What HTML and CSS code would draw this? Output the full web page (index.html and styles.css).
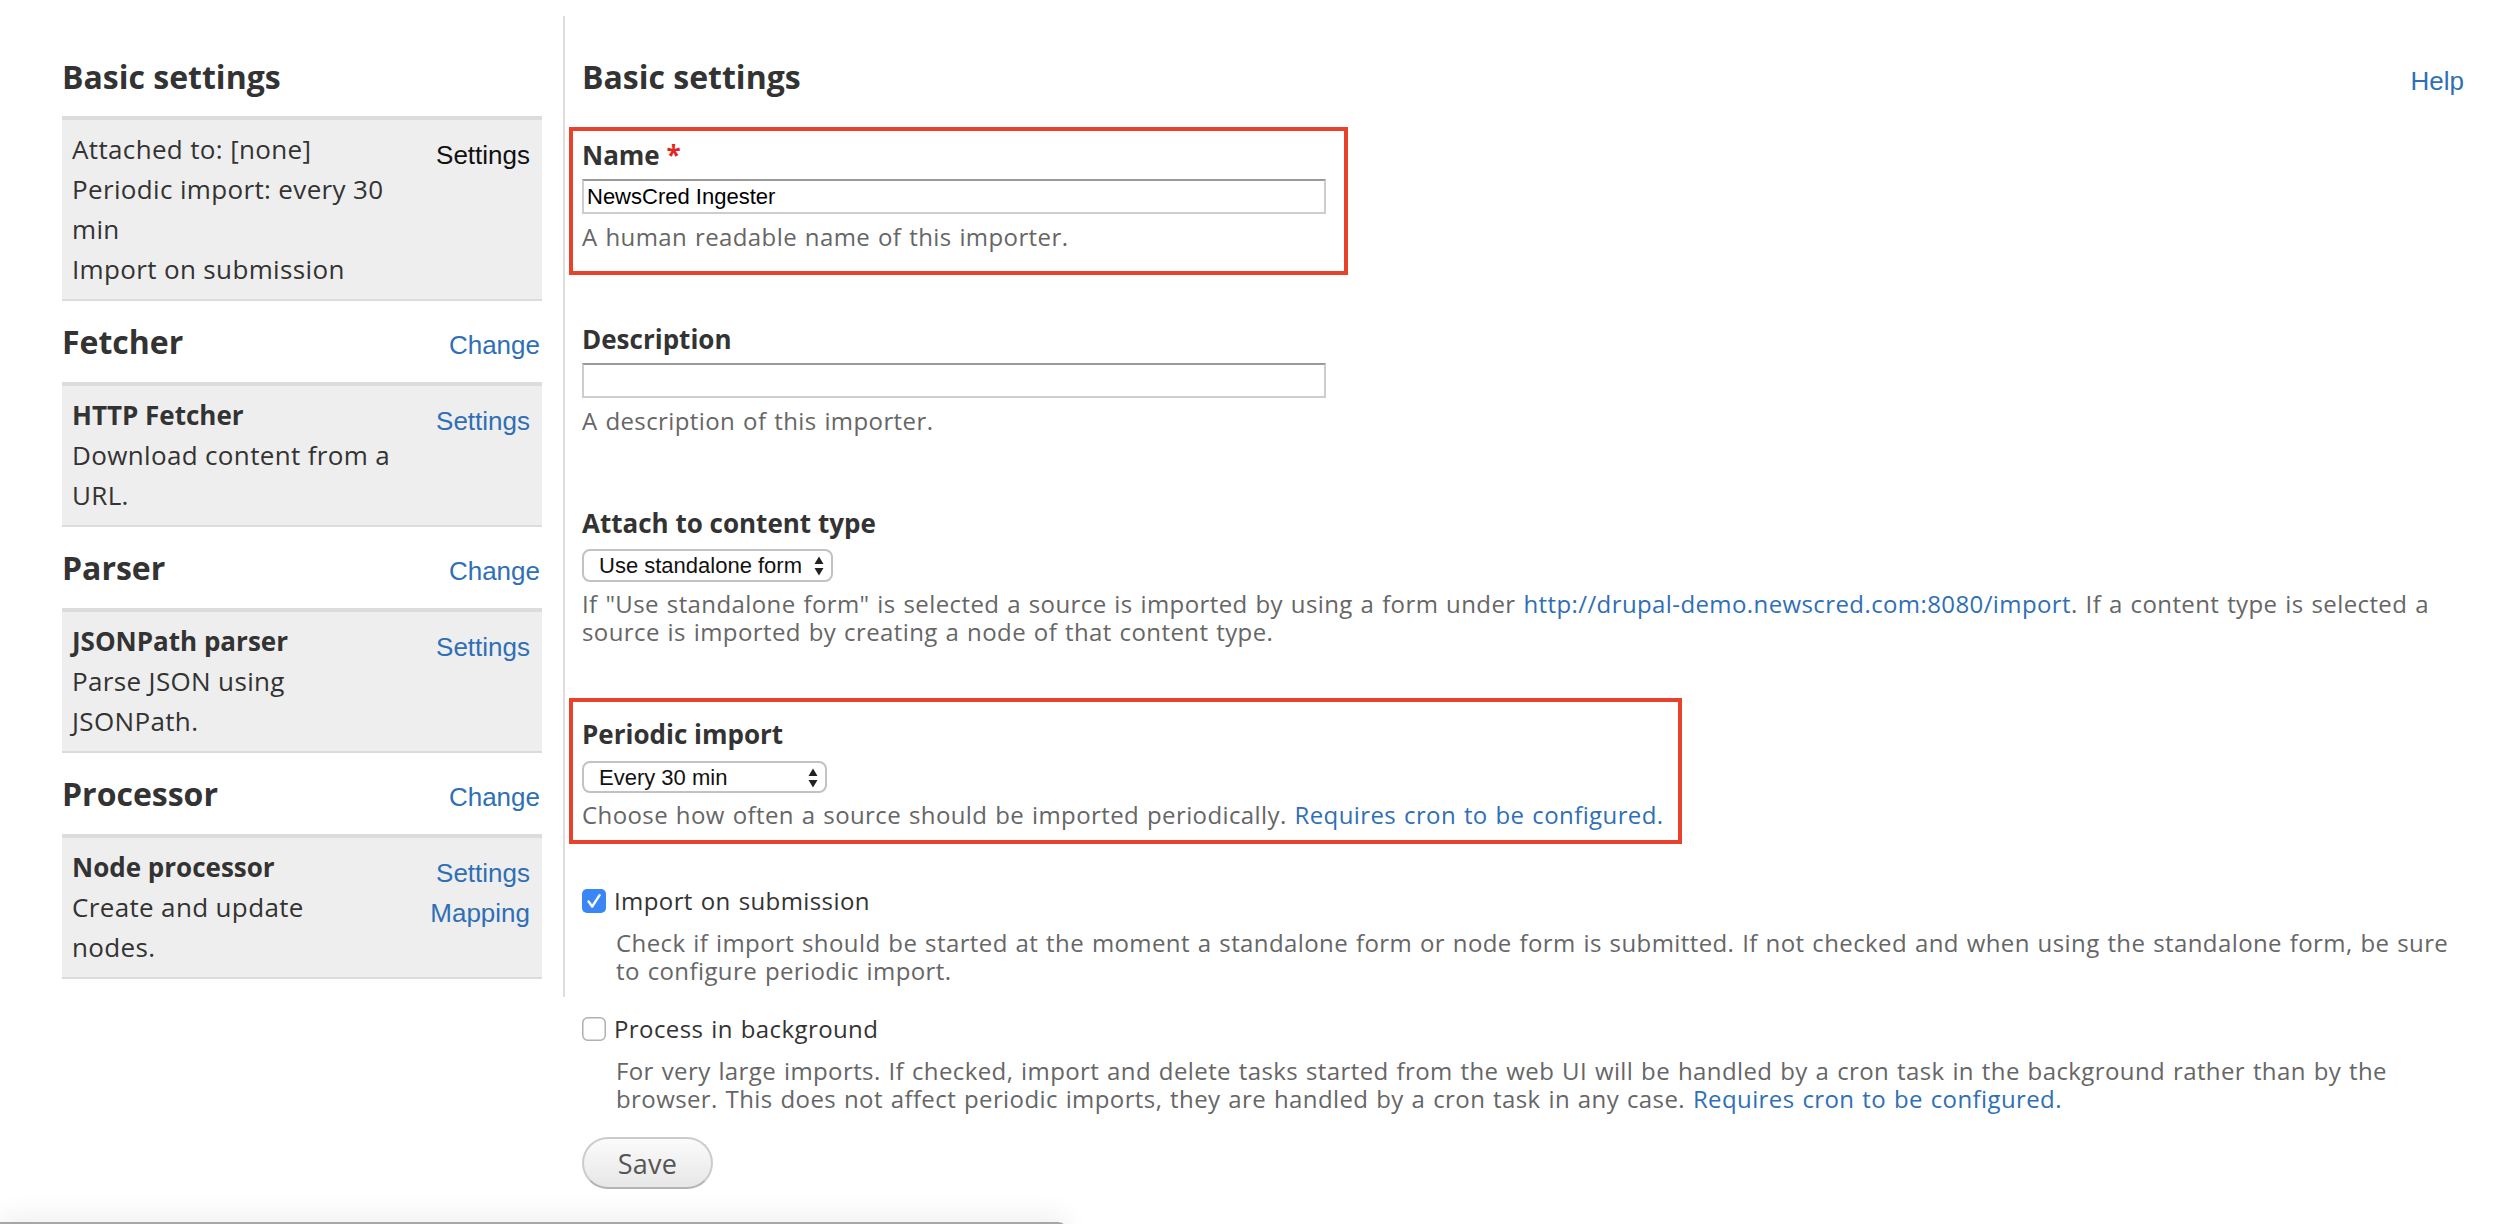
FILE: index.html
```html
<!DOCTYPE html>
<html lang="en">
<head>
<meta charset="utf-8">
<title>Feeds importer – Basic settings</title>
<link rel="stylesheet" href="styles.css">
</head>
<body>
<div class="page">
  <aside class="sidebar">
    <section class="feeds-section">
      <div class="section-head"><h2>Basic settings</h2></div>
      <div class="section-body">
        <div class="config">
          <div>Attached to: [none]</div>
          <div>Periodic import: every 30 min</div>
          <div>Import on submission</div>
        </div>
        <div class="links"><a class="plain" href="#">Settings</a></div>
      </div>
    </section>
    <section class="feeds-section">
      <div class="section-head"><h2>Fetcher</h2><a class="change" href="#">Change</a></div>
      <div class="section-body">
        <div class="config">
          <div class="config-title">HTTP Fetcher</div>
          <div>Download content from a URL.</div>
        </div>
        <div class="links"><a href="#">Settings</a></div>
      </div>
    </section>
    <section class="feeds-section">
      <div class="section-head"><h2>Parser</h2><a class="change" href="#">Change</a></div>
      <div class="section-body">
        <div class="config">
          <div class="config-title">JSONPath parser</div>
          <div>Parse JSON using JSONPath.</div>
        </div>
        <div class="links"><a href="#">Settings</a></div>
      </div>
    </section>
    <section class="feeds-section">
      <div class="section-head"><h2>Processor</h2><a class="change" href="#">Change</a></div>
      <div class="section-body">
        <div class="config">
          <div class="config-title">Node processor</div>
          <div>Create and update nodes.</div>
        </div>
        <div class="links"><a href="#">Settings</a><a href="#">Mapping</a></div>
      </div>
    </section>
  </aside>

  <main class="main">
    <div class="main-head"><h2>Basic settings</h2><a class="help" href="#">Help</a></div>

    <div class="form-item">
      <label class="title">Name <span class="req">*</span></label>
      <input class="text-input" type="text" value="NewsCred Ingester">
      <div class="description">A human readable name of this importer.</div>
      <div class="annotation annotation-name"></div>
    </div>

    <div class="form-item">
      <label class="title">Description</label>
      <input class="text-input" type="text" value="">
      <div class="description">A description of this importer.</div>
    </div>

    <div class="form-item">
      <label class="title">Attach to content type</label>
      <div class="select-wrap select-type">
        <select class="select"><option>Use standalone form</option></select>
        <svg class="select-arrows" viewBox="0 0 10 20" width="10" height="20"><path d="M5 0.5 L9.5 8 H0.5 Z M0.5 12 H9.5 L5 19.5 Z" fill="#222"/></svg>
      </div>
      <div class="description">If "Use standalone form" is selected a source is imported by using a form under <a href="#">http://drupal-demo.newscred.com:8080/import</a>. If a content type is selected a source is imported by creating a node of that content type.</div>
    </div>

    <div class="form-item item-periodic">
      <label class="title">Periodic import</label>
      <div class="select-wrap select-period">
        <select class="select"><option>Every 30 min</option></select>
        <svg class="select-arrows" viewBox="0 0 10 20" width="10" height="20"><path d="M5 0.5 L9.5 8 H0.5 Z M0.5 12 H9.5 L5 19.5 Z" fill="#222"/></svg>
      </div>
      <div class="description">Choose how often a source should be imported periodically. <a href="#">Requires cron to be configured.</a></div>
      <div class="annotation annotation-periodic"></div>
    </div>

    <div class="form-item form-checkbox">
      <label class="option">
        <span class="checkbox"><svg viewBox="0 0 24 24" width="24" height="24"><rect x="0" y="0" width="24" height="24" rx="5" fill="#3a86f4"/><path d="M6.5 12.5 L10.2 17.5 L17.6 6.2" fill="none" stroke="#fff" stroke-width="2.4" stroke-linecap="round" stroke-linejoin="round"/></svg></span>Import on submission
      </label>
      <div class="description">Check if import should be started at the moment a standalone form or node form is submitted. If not checked and when using the standalone form, be sure to configure periodic import.</div>
    </div>

    <div class="form-item form-checkbox">
      <label class="option">
        <span class="checkbox"><svg viewBox="0 0 24 24" width="24" height="24"><rect x="0.75" y="0.75" width="22.5" height="22.5" rx="5" fill="#fff" stroke="#b0b0b0" stroke-width="1.5"/></svg></span>Process in background
      </label>
      <div class="description">For very large imports. If checked, import and delete tasks started from the web UI will be handled by a cron task in the background rather than by the browser. This does not affect periodic imports, they are handled by a cron task in any case. <a href="#">Requires cron to be configured.</a></div>
    </div>

    <button class="button" type="button">Save</button>
  </main>
</div>
<div class="shelf"></div>
</body>
</html>
```

FILE: styles.css
```css
* { box-sizing: border-box; }

html, body {
  margin: 0;
  background: #fff;
}

body {
  font-family: "Open Sans", "DejaVu Sans", sans-serif;
  font-size: 26px;
  line-height: 40px;
  letter-spacing: 0.35px;
  color: #333;
}

a {
  color: #2f6fb6;
  text-decoration: none;
}

h2 {
  margin: 0;
  font-size: 32px;
  line-height: 40px;
  font-weight: 700;
  letter-spacing: 0;
  color: #333;
}

.page {
  display: flex;
  align-items: flex-start;
  padding: 16px 50px 0 62px;
}

/* ---------- sidebar ---------- */
.sidebar {
  flex: none;
  width: 503px;
  padding: 41px 21px 18px 0;
  border-right: 2px solid #dedede;
}

.section-head {
  display: flex;
  justify-content: space-between;
  align-items: baseline;
  margin: 21px 0 17px;
}

.feeds-section:first-child .section-head {
  margin: 0 0 19px;
}

.change {
  font-family: "Liberation Sans", Arial, sans-serif;
  letter-spacing: 0;
  margin-right: 2px;
}

.section-body {
  display: flex;
  align-items: flex-start;
  background: #eee;
  border-top: 4px solid #dcdcdc;
  border-bottom: 2px solid #dcdcdc;
  padding: 9px 12px 10px 10px;
}

.config {
  width: 321px;
}

.config-title {
  font-weight: 700;
  letter-spacing: 0;
}

.links {
  margin-left: auto;
  display: flex;
  flex-direction: column;
  align-items: flex-end;
  padding-top: 6px;
  font-family: "Liberation Sans", Arial, sans-serif;
  letter-spacing: 0;
}

.links .plain {
  color: #111;
}

/* ---------- main ---------- */
.main {
  flex: 1;
  min-width: 0;
  padding: 41px 0 0 17px;
}

.main-head {
  display: flex;
  justify-content: space-between;
  align-items: flex-start;
  margin-bottom: 34px;
}

.help {
  margin-top: 4px;
  font-family: "Liberation Sans", Arial, sans-serif;
  letter-spacing: 0;
}

.form-item {
  position: relative;
  margin-bottom: 68px;
}

.form-item.item-periodic {
  margin-bottom: 52px;
}

.form-item.form-checkbox {
  margin-bottom: 24px;
}

.title {
  display: block;
  font-weight: 700;
  letter-spacing: 0;
}

.req {
  color: #e3261b;
}

.text-input {
  display: block;
  width: 744px;
  height: 35px;
  margin: 4px 0 0;
  padding: 0 3px;
  border: 2px solid #cdcdcd;
  border-top-color: #9a9a9a;
  background: #fff;
  font-family: "Liberation Sans", Arial, sans-serif;
  font-size: 22px;
  letter-spacing: 0;
  color: #000;
  outline: none;
}

.description {
  margin-top: 9px;
  font-size: 24px;
  line-height: 28px;
  letter-spacing: 0.4px;
  word-spacing: 1.2px;
  color: #666;
}

.select-wrap {
  position: relative;
  margin-top: 6px;
}

.select-wrap + .description {
  margin-top: 8px;
}

.select-type {
  width: 251px;
  height: 33px;
}

.select-period {
  width: 245px;
  height: 32px;
  margin-top: 7px;
}

.select {
  -webkit-appearance: none;
  appearance: none;
  display: block;
  width: 100%;
  height: 100%;
  margin: 0;
  padding: 0 30px 0 15px;
  border: 2px solid #c2c2c2;
  border-radius: 8px;
  background: #fff;
  font-family: "Liberation Sans", Arial, sans-serif;
  font-size: 22px;
  letter-spacing: 0;
  color: #111;
}

.select-arrows {
  position: absolute;
  right: 9px;
  top: 7px;
  pointer-events: none;
}

.option {
  display: flex;
  align-items: center;
  font-size: 24px;
  letter-spacing: 0.4px;
  word-spacing: 1.3px;
}

.checkbox {
  flex: none;
  display: flex;
  width: 24px;
  height: 24px;
  margin-right: 8px;
}

.form-checkbox .description {
  margin-top: 8px;
  padding-left: 34px;
}

.button {
  display: block;
  width: 131px;
  height: 52px;
  margin: 0;
  padding: 0;
  border: 2px solid #cbcbcb;
  border-bottom-color: #b4b4b4;
  border-radius: 26px;
  background: linear-gradient(#fbfbfb, #e7e7e7);
  font-family: "Open Sans", "DejaVu Sans", sans-serif;
  font-size: 27px;
  letter-spacing: 0.3px;
  color: #555;
  text-align: center;
}

/* red annotation frames drawn over the form */
.annotation {
  position: absolute;
  left: -13px;
  border: 4px solid #e8412c;
  pointer-events: none;
}

.annotation-name {
  top: -8px;
  width: 779px;
  height: 148px;
}

.annotation-periodic {
  top: -16px;
  width: 1113px;
  height: 146px;
}

/* edge of the panel at the bottom of the window */
.shelf {
  position: fixed;
  left: 0;
  bottom: -42px;
  width: 1068px;
  height: 44px;
  background: #fff;
  border-top: 2px solid #a6a6a6;
  border-top-right-radius: 10px;
  box-shadow: 0 -8px 26px rgba(0, 0, 0, 0.06);
}
```
